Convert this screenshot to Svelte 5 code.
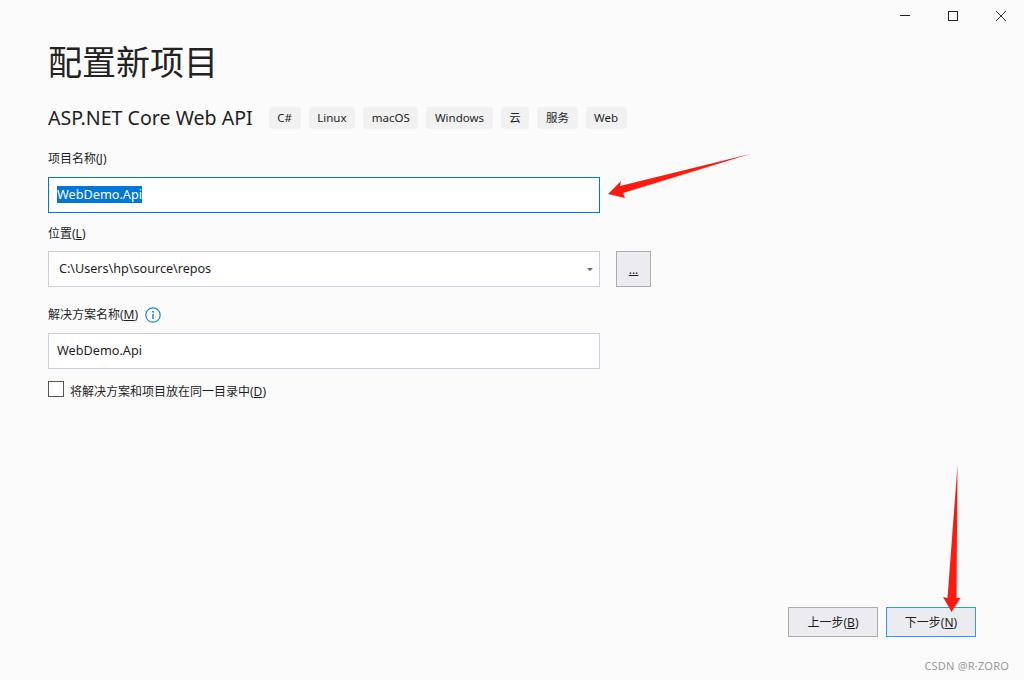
<script>
  const tags = ['C#', 'Linux', 'macOS', 'Windows', '云', '服务', 'Web'];
</script>

<div class="window">
  <div class="caption">
    <button class="cap" aria-label="最小化"><svg width="12" height="12" viewBox="0 0 12 12"><path d="M1 5.500h10" stroke="#222" fill="none" /></svg></button>
    <button class="cap" aria-label="最大化"><svg width="12" height="12" viewBox="0 0 12 12"><rect x="1.500" y="1.500" width="9" height="9" stroke="#222" fill="none" /></svg></button>
    <button class="cap" aria-label="关闭"><svg width="12" height="12" viewBox="0 0 12 12"><path d="M1 1l10 10M11 1L1 11" stroke="#333" fill="none" /></svg></button>
  </div>

  <main class="content">
    <h1>配置新项目</h1>

    <div class="template">
      <span class="template-name">ASP.NET Core Web API</span>
      <div class="tags">
        {#each tags as tag}
          <span class="tag">{tag}</span>
        {/each}
      </div>
    </div>

    <div class="label first"><span>项目名称(<u>J</u>)</span></div>
    <div class="input focused"><span class="selected">WebDemo.Api</span></div>

    <div class="label second"><span>位置(<u>L</u>)</span></div>
    <div class="location-row">
      <div class="input combo">
        <span class="path">C:\Users\hp\source\repos</span>
        <span class="caret"></span>
      </div>
      <button class="browse"><u>...</u></button>
    </div>

    <div class="label third">
      <span>解决方案名称(<u>M</u>)</span>
      <svg width="16" height="16" viewBox="0 0 16 16">
        <circle cx="8" cy="8" r="7.200" fill="none" stroke="#1f86d8" stroke-width="1.200" />
        <circle cx="8" cy="4.800" r="1" fill="#1f86d8" />
        <path d="M8 7v5" stroke="#1f86d8" stroke-width="1.500" />
      </svg>
    </div>
    <div class="input">WebDemo.Api</div>

    <div class="check-row">
      <span class="checkbox"></span>
      <span class="check-text">将解决方案和项目放在同一目录中(<u>D</u>)</span>
    </div>
  </main>

  <footer class="actions">
    <button class="action">上一步(<u>B</u>)</button>
    <button class="action primary">下一步(<u>N</u>)</button>
  </footer>

  <div class="watermark">CSDN @R·ZORO</div>

  <svg class="arrows" width="1024" height="680" viewBox="0 0 1024 680">
    <path d="M750 154 L620 186 L621 181 L608 194 L625 198 L623 193 Z" fill="#ff1a0d" />
    <path d="M957.500 465 L956.500 598 L960.500 598 L951.500 612 L943 597 L947.500 598 Z" fill="#ff1a0d" />
  </svg>
</div>

<style>
  :global(body) {
    margin: 0;
    background: #fbfbfb;
  }

  .window {
    position: relative;
    width: 1024px;
    height: 680px;
    overflow: hidden;
    background: #fbfbfb;
    color: #1e1e1e;
    font-family: "Noto Sans", "Noto Sans CJK SC", sans-serif;
    font-size: 12px;
  }

  .caption {
    display: flex;
    justify-content: flex-end;
    height: 32px;
    margin-right: -1px;
  }

  .cap {
    width: 48px;
    height: 32px;
    padding: 0;
    border: 0;
    background: none;
    display: flex;
    align-items: center;
    justify-content: center;
  }

  .content {
    padding: 0 48px;
  }

  h1 {
    margin: 6px 0 0;
    font-size: 34px;
    font-weight: 400;
    line-height: 46px;
    color: #222;
    font-family: "Noto Sans CJK SC", sans-serif;
  }

  .template {
    display: flex;
    align-items: center;
    gap: 16px;
    margin-top: 23px;
    height: 22px;
  }

  .template-name {
    font-size: 19.600px;
    line-height: 22px;
  }

  .tags {
    display: flex;
    gap: 8px;
  }

  .tag {
    height: 22px;
    line-height: 22px;
    padding: 0 8.600px;
    border-radius: 4px;
    background: #f1f1f1;
    font-size: 11.500px;
  }

  .label {
    display: flex;
    align-items: center;
    gap: 7px;
    height: 18px;
    line-height: 18px;
    margin-bottom: 9px;
  }

  .first { margin-top: 21px; }
  .second { margin-top: 12px; margin-bottom: 8px; }
  .third { margin-top: 19px; }

  .input {
    box-sizing: border-box;
    width: 552px;
    height: 36px;
    line-height: 32px;
    padding: 0 8px;
    background: #fff;
    border: 1px solid #ccceDB;
    font-size: 12.700px;
  }

  .focused {
    border-color: #007acc;
  }

  .selected {
    display: inline-block;
    height: 17px;
    line-height: 17px;
    background: #0078d7;
    color: #fff;
  }

  .location-row {
    display: flex;
    gap: 16px;
  }

  .combo {
    display: flex;
    align-items: center;
    justify-content: space-between;
    padding: 0 6px 0 10px;
  }

  .path {
    font-size: 12.600px;
  }

  .caret {
    width: 0;
    height: 0;
    border-left: 3px solid transparent;
    border-right: 3px solid transparent;
    border-top: 3px solid #666;
  }

  .browse {
    box-sizing: border-box;
    width: 35px;
    height: 36px;
    padding: 0;
    border: 1px solid #acacac;
    background: #ecebf0;
    color: #1e1e1e;
    font: inherit;
  }

  .check-row {
    display: flex;
    align-items: center;
    gap: 6px;
    margin-top: 12px;
    height: 16px;
  }

  .check-text {
    margin-top: 4px;
  }

  .checkbox {
    box-sizing: border-box;
    width: 16px;
    height: 16px;
    border: 1px solid #555;
    background: #fff;
  }

  .actions {
    position: absolute;
    right: 48px;
    bottom: 43px;
    display: flex;
    gap: 8px;
  }

  .action {
    box-sizing: border-box;
    width: 90px;
    height: 30px;
    padding: 0;
    border: 1px solid #acacac;
    background: #ecebf0;
    color: #1e1e1e;
    font: inherit;
  }

  .primary {
    border-color: #3399ff;
  }

  .watermark {
    position: absolute;
    right: 15px;
    bottom: 7px;
    font-size: 11px;
    color: #9a9a9a;
    letter-spacing: 0.200px;
  }

  .arrows {
    position: absolute;
    left: 0;
    top: 0;
    pointer-events: none;
  }
</style>
